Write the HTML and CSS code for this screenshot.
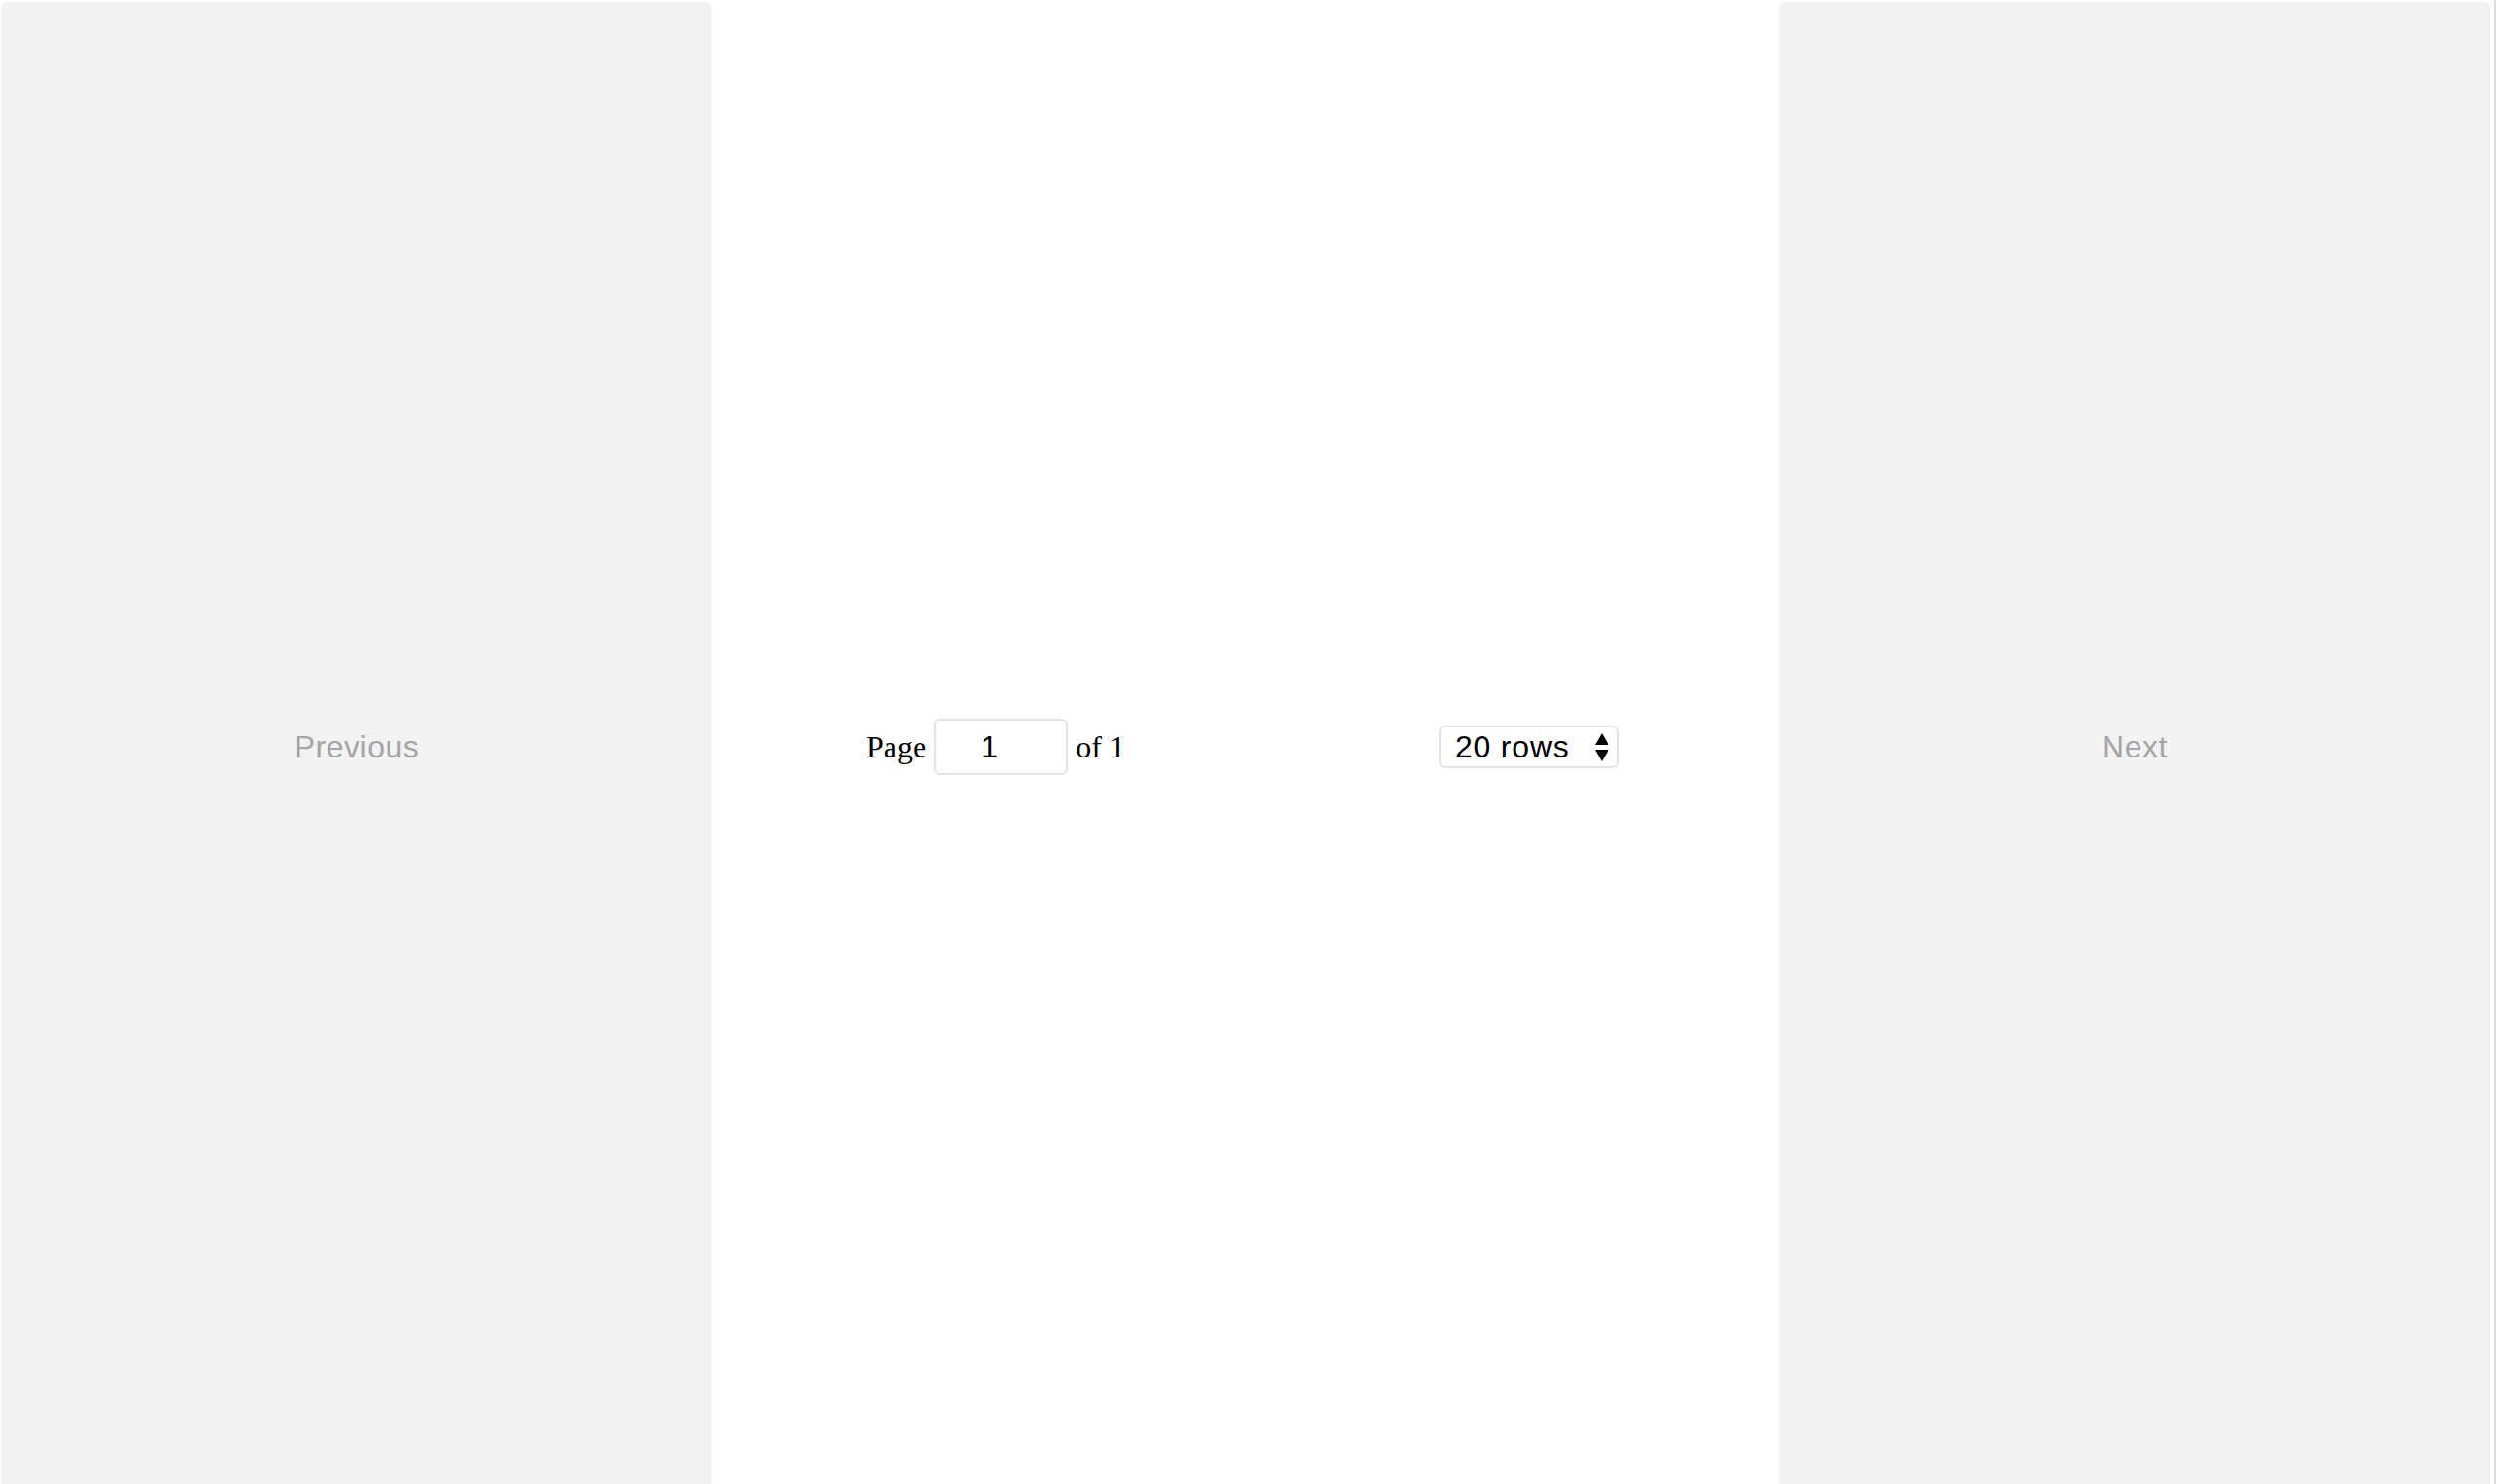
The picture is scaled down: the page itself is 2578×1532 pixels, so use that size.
FILE: index.html
```html
<!DOCTYPE html>
<html lang="en">
<head>
<meta charset="utf-8">
<title>Pagination</title>
<link rel="stylesheet" href="styles.css">
</head>
<body>
<div class="table">
  <div class="pagination">
    <div class="side">
      <button class="btn" disabled>Previous</button>
    </div>
    <div class="center">
      <span class="page-info">Page <span class="page-jump"><input class="page-input" type="text" value="1" aria-label="jump to page"></span> of <span class="total">1</span></span>
      <span class="size-options">
        <span class="select-box">
          <select class="size-select" aria-label="rows per page">
            <option>5 rows</option>
            <option>10 rows</option>
            <option selected>20 rows</option>
            <option>25 rows</option>
            <option>50 rows</option>
            <option>100 rows</option>
          </select>
          <svg class="arrows" width="14" height="29" viewBox="0 0 14 29" aria-hidden="true">
            <polygon points="0,12 7,0 14,12" fill="#000"/>
            <polygon points="0,17 14,17 7,29" fill="#000"/>
          </svg>
        </span>
      </span>
    </div>
    <div class="side">
      <button class="btn" disabled>Next</button>
    </div>
  </div>
</div>
</body>
</html>
```

FILE: styles.css
```css
html {
  overflow: hidden;
  background: #fff;
}

body {
  margin: 0;
  background: #fff;
}

.table {
  width: 2576px;
  box-sizing: border-box;
  padding: 2px 4px 0 1px;
  border-right: 2px solid #dcdcdc;
}

.pagination {
  display: flex;
  align-items: stretch;
  justify-content: space-between;
  height: 1538px;
}

.side {
  flex: 1 1 0%;
  text-align: center;
}

.btn {
  appearance: none;
  -webkit-appearance: none;
  display: block;
  width: 100%;
  height: 100%;
  border: 0;
  border-radius: 6px;
  padding: 12px;
  margin: 0;
  font-family: "Liberation Sans", Arial, sans-serif;
  font-size: 32px;
  letter-spacing: 0.5px;
  color: #a5a5a5;
  background: #f2f2f2;
  cursor: default;
}

.center {
  flex: 1.5 1 0%;
  display: flex;
  flex-direction: row;
  align-items: center;
  justify-content: space-around;
  text-align: center;
}

.page-info {
  display: inline-block;
  margin: 6px 23px 6px 17px;
  white-space: nowrap;
  font-family: "Liberation Serif", "Times New Roman", serif;
  font-size: 32px;
  color: #000;
}

.page-jump {
  display: inline-block;
}

.page-input {
  box-sizing: border-box;
  width: 138px;
  height: 58px;
  padding: 0 38px 0 14px;
  border: 2px solid #e3e3e3;
  border-radius: 6px;
  background: #fff;
  font-family: "Liberation Sans", Arial, sans-serif;
  font-size: 32px;
  color: #000;
  text-align: center;
  outline: none;
  vertical-align: baseline;
}

.size-options {
  margin: 6px 23px 6px 17px;
}

.select-box {
  display: inline-flex;
  align-items: center;
  box-sizing: border-box;
  height: 44px;
  padding: 0 9px 0 15px;
  border: 2px solid #e3e3e3;
  border-radius: 6px;
  background: #fff;
}

.size-select {
  appearance: none;
  -webkit-appearance: none;
  width: 144px;
  border: 0;
  padding: 0;
  margin: 0;
  background: transparent;
  font-family: "Liberation Sans", Arial, sans-serif;
  font-size: 32px;
  letter-spacing: 0.8px;
  line-height: 36px;
  color: #000;
  outline: none;
}

.arrows {
  display: block;
  flex: none;
}
```
